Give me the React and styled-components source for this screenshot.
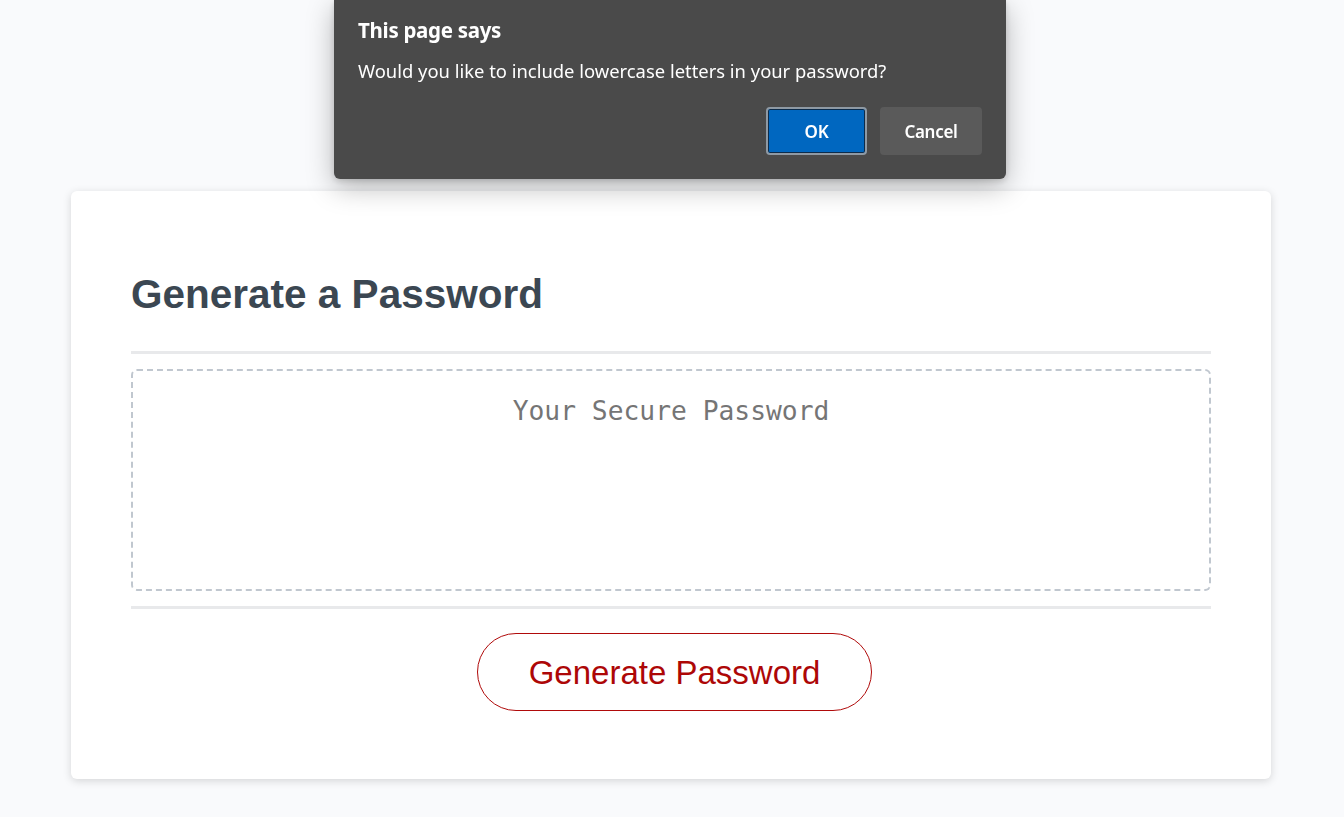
import styled, { createGlobalStyle } from "styled-components"

const GlobalStyle = createGlobalStyle`
  html, body {
    margin: 0;
    padding: 0;
    background: #f9fafc;
    font-family: "Liberation Sans", Arial, sans-serif;
  }
  * { box-sizing: border-box; }
`

const Page = styled.div`
  min-height: 817px;
  padding-top: 191px;
`

const Card = styled.main`
  width: 1200px;
  margin: 0 auto;
  position: relative;
  left: -1px;
  background: #fff;
  border-radius: 6px;
  box-shadow: rgba(0, 0, 0, 0.15) 0px 2px 8px 0px;
  padding: 79px 60px 68px;
  color: #3b4752;
`

const Title = styled.h2`
  margin: 0;
  font-size: 40.5px;
  line-height: 48px;
  font-weight: 700;
`

const Divider = styled.hr`
  border: none;
  height: 3px;
  background: #e8e9eb;
  margin: ${(p) => p.$top || 0}px 0 0;
`

const Output = styled.textarea`
  display: block;
  width: 100%;
  height: 222px;
  margin: 15px 0 15px;
  border: 2px dashed #c0c7cf;
  border-radius: 6px;
  resize: none;
  padding: 25px 15px 0;
  font-family: "DejaVu Sans Mono", monospace;
  font-size: 26.3px;
  text-align: center;
  outline: none;
  background: #fff;
  &::placeholder {
    color: #757575;
  }
`

const Footer = styled.div`
  display: flex;
  justify-content: center;
  padding: 24px 0 0 7px;
`

const GenerateBtn = styled.button`
  height: 78px;
  padding: 0 51px;
  border: 1px solid #b00a0a;
  border-radius: 40px;
  background: #fff;
  color: #ad0707;
  font-family: "Liberation Sans", Arial, sans-serif;
  font-size: 33px;
  line-height: 1;
  cursor: pointer;
`

// the browser's confirm() box laid over the page
const Dialog = styled.div`
  position: fixed;
  top: 0;
  left: calc(50% - 338px);
  width: 672px;
  height: 179px;
  background: #4a4a4a;
  border-radius: 0 0 6px 6px;
  box-shadow: 0 8px 28px rgba(0, 0, 0, 0.28), 0 2px 6px rgba(0, 0, 0, 0.15);
  color: #fff;
  font-family: "Noto Sans", "Open Sans", sans-serif;
  padding: 16px 24px 24px;
  display: flex;
  flex-direction: column;
`

const DialogTitle = styled.div`
  font-size: 20.5px;
  font-weight: 700;
  line-height: 28px;
  letter-spacing: -0.3px;
`

const DialogText = styled.div`
  margin-top: 14px;
  font-size: 18.4px;
  line-height: 26px;
`

const Actions = styled.div`
  margin-top: auto;
  display: flex;
  justify-content: flex-end;
  gap: 13px;
`

const DialogBtn = styled.button`
  width: ${(p) => (p.$primary ? 101 : 102)}px;
  height: 48px;
  border-radius: 4px;
  font-family: "Noto Sans", "Open Sans", sans-serif;
  font-size: 17px;
  font-weight: 600;
  color: #fff;
  cursor: pointer;
  letter-spacing: -0.3px;
  background: ${(p) => (p.$primary ? "#0067c0" : "#5a5a5a")};
  border: ${(p) => (p.$primary ? "2px solid #8e99a4" : "none")};
  box-shadow: ${(p) => (p.$primary ? "inset 0 0 0 1px #0c2b4a" : "none")};
`

export default function App() {
  return (
    <>
      <GlobalStyle />
      <Page>
        <Card>
          <header>
            <Title>Generate a Password</Title>
            <Divider $top={33} />
          </header>
          <Output placeholder="Your Secure Password" readOnly />
          <Divider />
          <Footer>
            <GenerateBtn>Generate Password</GenerateBtn>
          </Footer>
        </Card>
      </Page>
      <Dialog role="dialog">
        <DialogTitle>This page says</DialogTitle>
        <DialogText>Would you like to include lowercase letters in your password?</DialogText>
        <Actions>
          <DialogBtn $primary>OK</DialogBtn>
          <DialogBtn>Cancel</DialogBtn>
        </Actions>
      </Dialog>
    </>
  )
}
